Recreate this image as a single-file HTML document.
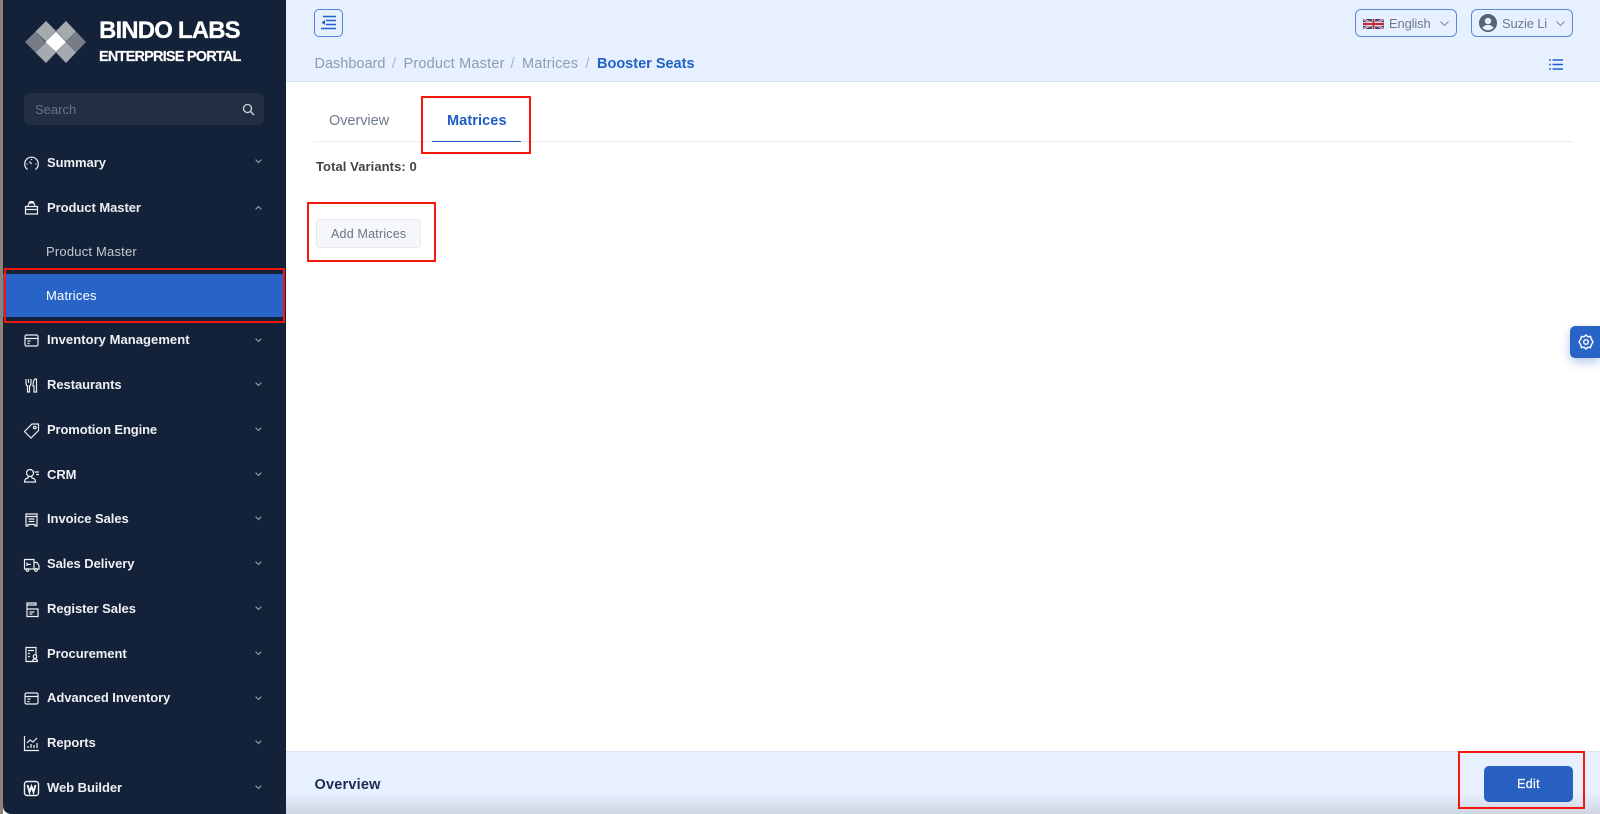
<!DOCTYPE html>
<html><head><meta charset="utf-8"><style>
*{box-sizing:border-box}
html,body{margin:0;padding:0;width:1600px;height:814px;overflow:hidden;background:#fff;font-family:"Liberation Sans",sans-serif}
.a{position:absolute;white-space:nowrap}
#side{position:absolute;left:3px;top:0;width:283px;height:814px;background:#132238;border-radius:0 0 0 8px}
.item{position:absolute;left:47px;color:#eef0f3;font-size:13px;font-weight:700;letter-spacing:-.05px;line-height:16px;white-space:nowrap}
.ch{position:absolute;left:255px;width:7px;height:5px}
.ic{position:absolute;left:23px;width:17px;height:17px;fill:none;stroke:#eef0f3;stroke-width:1.200}
.r{position:absolute;border:2px solid #f5160c}
.bc{position:absolute;top:56px;font-size:14.500px;line-height:17px;color:#8f9bb0;white-space:nowrap}
.sl{color:#a9b3c4}
</style></head><body>
<div class="a" style="left:0;top:0;width:3px;height:814px;background:#8f8372"></div>
<div class="a" style="left:286px;top:0;width:1314px;height:82px;background:#e6f0ff;border-bottom:1px solid #d5e1f3"></div>
<div id="side"></div>
<svg class="a" style="left:25px;top:21px" width="62" height="42" viewBox="0 0 62 42">
<path fill="#a5a9b0" d="M21 0 31 10 21 20.500 10.500 10.500ZM41 0 51 10.500 41 20.500 31 10ZM21 42 31 31.500 21 21 10.500 31.500ZM41 42 51 31.500 41 21 31 31.500Z"/>
<path fill="#767d89" d="M0 21 10.500 10.500 20.500 21 10.500 31.500ZM61 21 51 10.500 41 21 51 31.500Z"/>
<path fill="#fff" d="M31 10.500 41 21 31 31 20.500 21Z"/></svg>
<div class="a" style="left:99px;top:18px;color:#fff;font-size:24px;font-weight:700;line-height:26px;letter-spacing:-.85px;-webkit-text-stroke:.25px #fff">BINDO LABS</div>
<div class="a" style="left:99px;top:49px;color:#fff;font-size:14.500px;font-weight:700;line-height:17px;letter-spacing:-.8px;-webkit-text-stroke:.15px #fff">ENTERPRISE PORTAL</div>
<div class="a" style="left:24px;top:93px;width:240px;height:32px;background:#222f43;border-radius:5px"></div>
<div class="a" style="left:35px;top:102px;color:#697484;font-size:13px;line-height:16px;letter-spacing:0">Search</div>
<svg class="a" style="left:242px;top:103px;fill:none;stroke:#cfd3d9;stroke-width:1.300" width="13" height="13" viewBox="0 0 13 13"><circle cx="5.500" cy="5.500" r="4"/><path d="M8.500 8.500 12 12"/></svg>

<div class="a" style="left:3px;top:274px;width:282px;height:43px;background:#2864c7"></div>
<div class="item" style="top:155px">Summary</div>
<div class="item" style="top:200px">Product Master</div>
<div class="item" style="left:46px;top:244px;font-weight:400;color:#c4c9d0;letter-spacing:.2px">Product Master</div>
<div class="item" style="left:46px;top:288px;font-weight:400;color:#fff;letter-spacing:.2px">Matrices</div>
<div class="item" style="top:332px;letter-spacing:.05px">Inventory Management</div>
<div class="item" style="top:377px">Restaurants</div>
<div class="item" style="top:422px;letter-spacing:-.12px">Promotion Engine</div>
<div class="item" style="top:467px">CRM</div>
<div class="item" style="top:511px">Invoice Sales</div>
<div class="item" style="top:556px">Sales Delivery</div>
<div class="item" style="top:601px">Register Sales</div>
<div class="item" style="top:646px">Procurement</div>
<div class="item" style="top:690px">Advanced Inventory</div>
<div class="item" style="top:735px">Reports</div>
<div class="item" style="top:780px">Web Builder</div>

<svg class="ic" style="top:155px" viewBox="0 0 17 17"><path d="M4.500 14.500A6.800 6.800 0 1 1 12.500 14.500"/><path d="M8.500 9 6.500 6.500M3.500 9h1M13.500 9h-1M8.500 4v1"/></svg>
<svg class="ic" style="top:199px" viewBox="0 0 17 17"><path d="M2.500 7.500h12v7.500h-12zM2.500 10.500h12M5 7.500 6 4h5l1 3.500M8.500 4V3M6 3l2.500-.5L11 3"/></svg>
<svg class="ic" style="top:332px" viewBox="0 0 17 17"><rect x="2" y="3" width="13" height="11" rx="1.500"/><path d="M2 6.500h13M4.500 9h3M4.500 11.500h2"/></svg>
<svg class="ic" style="top:377px" viewBox="0 0 17 17"><path d="M3 2v4c0 2 1 3 1.500 3V15h2V9C7 9 8 8 8 6V2M5.500 2v4M12 2c-1.500 1-2 4-2 7h1v6h2.500V2z"/></svg>
<svg class="ic" style="top:422px" viewBox="0 0 17 17"><path d="M1.500 9.500 9 2h6.500v6.500L8 16z"/><circle cx="11.800" cy="5.500" r="1.300"/></svg>
<svg class="ic" style="top:467px" viewBox="0 0 17 17"><circle cx="7" cy="6" r="3.500"/><path d="M5.500 9.500 5 11c-2 .5-3.500 1-3.500 4h11c0-3-1.500-3.500-3.500-4L8.500 9.500M11.500 5H16M13 7.500h3"/></svg>
<svg class="ic" style="top:511px" viewBox="0 0 17 17"><path d="M3 3h11v12h-2v-1.500H5V15H3zM3 5.500h11M5.500 8h6M5.500 10.500h6"/></svg>
<svg class="ic" style="top:556px" viewBox="0 0 17 17"><path d="M1.500 3.500h9.500v9.500H1.500zM11 6.500h3l2 3V13h-5zM4 8.300h4M4 6.500v3.500"/><circle cx="4.500" cy="14" r="1.300"/><circle cx="13" cy="14" r="1.300"/></svg>
<svg class="ic" style="top:601px" viewBox="0 0 17 17"><path d="M4 2h9v2H4zM4 4v11.500h11V8H4M6.500 11h5M6.500 13h3"/></svg>
<svg class="ic" style="top:646px" viewBox="0 0 17 17"><path d="M9 15.500H3v-14h10v7M5 4.500h6M5 7.500h2M5 10.500h2"/><circle cx="12" cy="10.500" r="1.800"/><path d="M9.500 15.500c0-2 1-2.500 2.500-2.500s2.500.5 2.500 2.500z"/></svg>
<svg class="ic" style="top:690px" viewBox="0 0 17 17"><rect x="2" y="3" width="13" height="11" rx="1.500"/><path d="M2 6.500h13M4.500 9h3M4.500 11.500h2"/></svg>
<svg class="ic" style="top:735px" viewBox="0 0 17 17"><path d="M1.500 1v14.500H16M4 8l3-3 3 2 4-4M5 13v-2M8 13V9M11 13v-3M14 13V8"/></svg>
<svg class="ic" style="top:780px;stroke-width:1.400" viewBox="0 0 17 17"><rect x="1.500" y="1.500" width="14" height="14" rx="2.500"/><path stroke-width="2" d="M4.500 5l2 7 2-5.500 2 5.500 2-7"/></svg>

<svg width="0" height="0" style="position:absolute"><defs><path id="d" d="M.6.600 3.500 3.500 6.400.6" fill="none" stroke="#9aa1ac" stroke-width="1.100"/></defs></svg>
<svg class="ch" style="top:159px" viewBox="0 0 7 5"><use href="#d"/></svg>
<svg class="ch" style="top:205px;transform:scaleY(-1)" viewBox="0 0 7 5"><use href="#d"/></svg>
<svg class="ch" style="top:338px" viewBox="0 0 7 5"><use href="#d"/></svg>
<svg class="ch" style="top:382px" viewBox="0 0 7 5"><use href="#d"/></svg>
<svg class="ch" style="top:427px" viewBox="0 0 7 5"><use href="#d"/></svg>
<svg class="ch" style="top:472px" viewBox="0 0 7 5"><use href="#d"/></svg>
<svg class="ch" style="top:516px" viewBox="0 0 7 5"><use href="#d"/></svg>
<svg class="ch" style="top:561px" viewBox="0 0 7 5"><use href="#d"/></svg>
<svg class="ch" style="top:606px" viewBox="0 0 7 5"><use href="#d"/></svg>
<svg class="ch" style="top:651px" viewBox="0 0 7 5"><use href="#d"/></svg>
<svg class="ch" style="top:696px" viewBox="0 0 7 5"><use href="#d"/></svg>
<svg class="ch" style="top:740px" viewBox="0 0 7 5"><use href="#d"/></svg>
<svg class="ch" style="top:785px" viewBox="0 0 7 5"><use href="#d"/></svg>

<div class="a" style="left:314px;top:9px;width:29px;height:28px;border:1px solid #4f82dc;border-radius:5px"></div>
<svg class="a" style="left:320px;top:15px;fill:none;stroke:#2160cc;stroke-width:1.500" width="17" height="16" viewBox="0 0 17 16"><path d="M3 1.500h13M6 5.500h10M6 9.500h10M1 13.500h15"/><path d="M5 5v5L1.500 7.500z" fill="#2160cc" stroke="none"/></svg>

<div class="bc" style="left:314.500px">Dashboard</div>
<div class="bc sl" style="left:392px">/</div>
<div class="bc" style="left:403.500px;letter-spacing:.2px">Product Master</div>
<div class="bc sl" style="left:510.500px">/</div>
<div class="bc" style="left:522px;letter-spacing:.18px">Matrices</div>
<div class="bc sl" style="left:585.500px">/</div>
<div class="bc" style="left:597px;color:#2160c4;font-weight:700">Booster Seats</div>

<div class="a" style="left:1355px;top:9px;width:102px;height:28px;border:1px solid #5b8adb;border-radius:6px"></div>
<svg class="a" style="left:1363px;top:19px" width="21" height="10" viewBox="0 0 21 10"><rect width="21" height="10" fill="#2a3f7e"/><path d="M0 0 21 10M21 0 0 10" stroke="#eee" stroke-width="2"/><path d="M0 0 21 10M21 0 0 10" stroke="#c8283c" stroke-width=".7"/><path d="M10.500 0v10M0 5h21" stroke="#eee" stroke-width="3.500"/><path d="M10.500 0v10M0 5h21" stroke="#c8283c" stroke-width="2"/></svg>
<div class="a" style="left:1389px;top:16px;font-size:13px;line-height:16px;color:#6f7a8e;letter-spacing:-.15px">English</div>
<svg class="a" style="left:1440px;top:21px;fill:none;stroke:#7f8a9e;stroke-width:1" width="9" height="6" viewBox="0 0 9 6"><path d="M.5.500 4.500 4.500 8.500.5"/></svg>
<div class="a" style="left:1471px;top:9px;width:102px;height:28px;border:1px solid #5b8adb;border-radius:6px"></div>
<svg class="a" style="left:1479px;top:14px" width="18" height="18" viewBox="0 0 18 18"><circle cx="9" cy="9" r="9" fill="#566278"/><circle cx="9" cy="7" r="3.200" fill="#e6f0ff"/><path d="M3.500 14c1-2.500 3-3 5.500-3s4.500.5 5.500 3c-1.500 1.500-3.500 2.300-5.500 2.300S5 15.500 3.500 14z" fill="#e6f0ff"/></svg>
<div class="a" style="left:1502px;top:16px;font-size:13px;line-height:16px;color:#6f7a8e;letter-spacing:-.15px">Suzie Li</div>
<svg class="a" style="left:1556px;top:21px;fill:none;stroke:#7f8a9e;stroke-width:1" width="9" height="6" viewBox="0 0 9 6"><path d="M.5.500 4.500 4.500 8.500.5"/></svg>
<svg class="a" style="left:1549px;top:59px" width="14" height="11" viewBox="0 0 14 11"><path d="M3.500 1H14M3.500 5.500H14M3.500 10H14" stroke="#2160cc" stroke-width="1.600"/><path d="M0 .2h1.800v1.600H0zM0 4.700h1.800v1.600H0zM0 9.200h1.800v1.600H0z" fill="#2160cc"/></svg>

<div class="a" style="left:314px;top:141px;width:1259px;height:1px;background:#e9ecf0"></div>
<div class="a" style="left:329px;top:113px;font-size:14.500px;line-height:17px;color:#6f7a8e;letter-spacing:-.05px">Overview</div>
<div class="a" style="left:447px;top:113px;font-size:14.500px;line-height:17px;color:#1f5cc6;font-weight:700;letter-spacing:.1px">Matrices</div>
<div class="a" style="left:432px;top:141px;width:89px;height:1px;background:#1f54c0"></div>
<div class="a" style="left:316px;top:159px;font-size:13px;line-height:16px;color:#444;font-weight:700;letter-spacing:.08px">Total Variants: 0</div>
<div class="a" style="left:316px;top:219px;width:105px;height:29px;background:#f5f7fa;border:1px solid #e6e9ee;border-radius:4px"></div>
<div class="a" style="left:331px;top:227px;font-size:12.500px;line-height:15px;color:#6a7488;letter-spacing:.2px">Add Matrices</div>

<div class="a" style="left:1570px;top:326px;width:30px;height:32px;background:#2864c7;border-radius:5px 0 0 5px;box-shadow:0 4px 10px rgba(40,100,199,.35)"></div>
<svg class="a" style="left:1578px;top:334px;fill:none;stroke:#fff;stroke-width:1.400" width="16" height="16" viewBox="0 0 16 16"><path d="M8 1 9.800 2.800 12.500 2.400 13.200 5 15 8 13.200 11 12.500 13.600 9.800 13.200 8 15 6.200 13.200 3.500 13.600 2.800 11 1 8 2.800 5 3.500 2.400 6.200 2.800z"/><circle cx="8" cy="8" r="2.300"/></svg>

<div class="a" style="left:286px;top:751px;width:1314px;height:63px;background:linear-gradient(#e6f0ff 0,#e6f0ff 66%,#d0d6e1 100%);border-top:1px solid #d9e3f2"></div>
<div class="a" style="left:314.500px;top:777px;font-size:14.500px;line-height:17px;font-weight:700;color:#1c2b4f;letter-spacing:.2px">Overview</div>
<div class="a" style="left:1484px;top:766px;width:89px;height:36px;background:#2860c2;border-radius:5px"></div>
<div class="a" style="left:1484px;top:776px;width:89px;text-align:center;font-size:12.500px;line-height:16px;color:#fff;font-weight:400;letter-spacing:.3px;-webkit-text-stroke:.2px #fff">Edit</div>

<div class="r" style="left:4px;top:268px;width:281px;height:55px"></div>
<div class="r" style="left:421px;top:96px;width:110px;height:58px"></div>
<div class="r" style="left:307px;top:202px;width:129px;height:60px"></div>
<div class="r" style="left:1458px;top:751px;width:127px;height:58px"></div>
</body></html>
